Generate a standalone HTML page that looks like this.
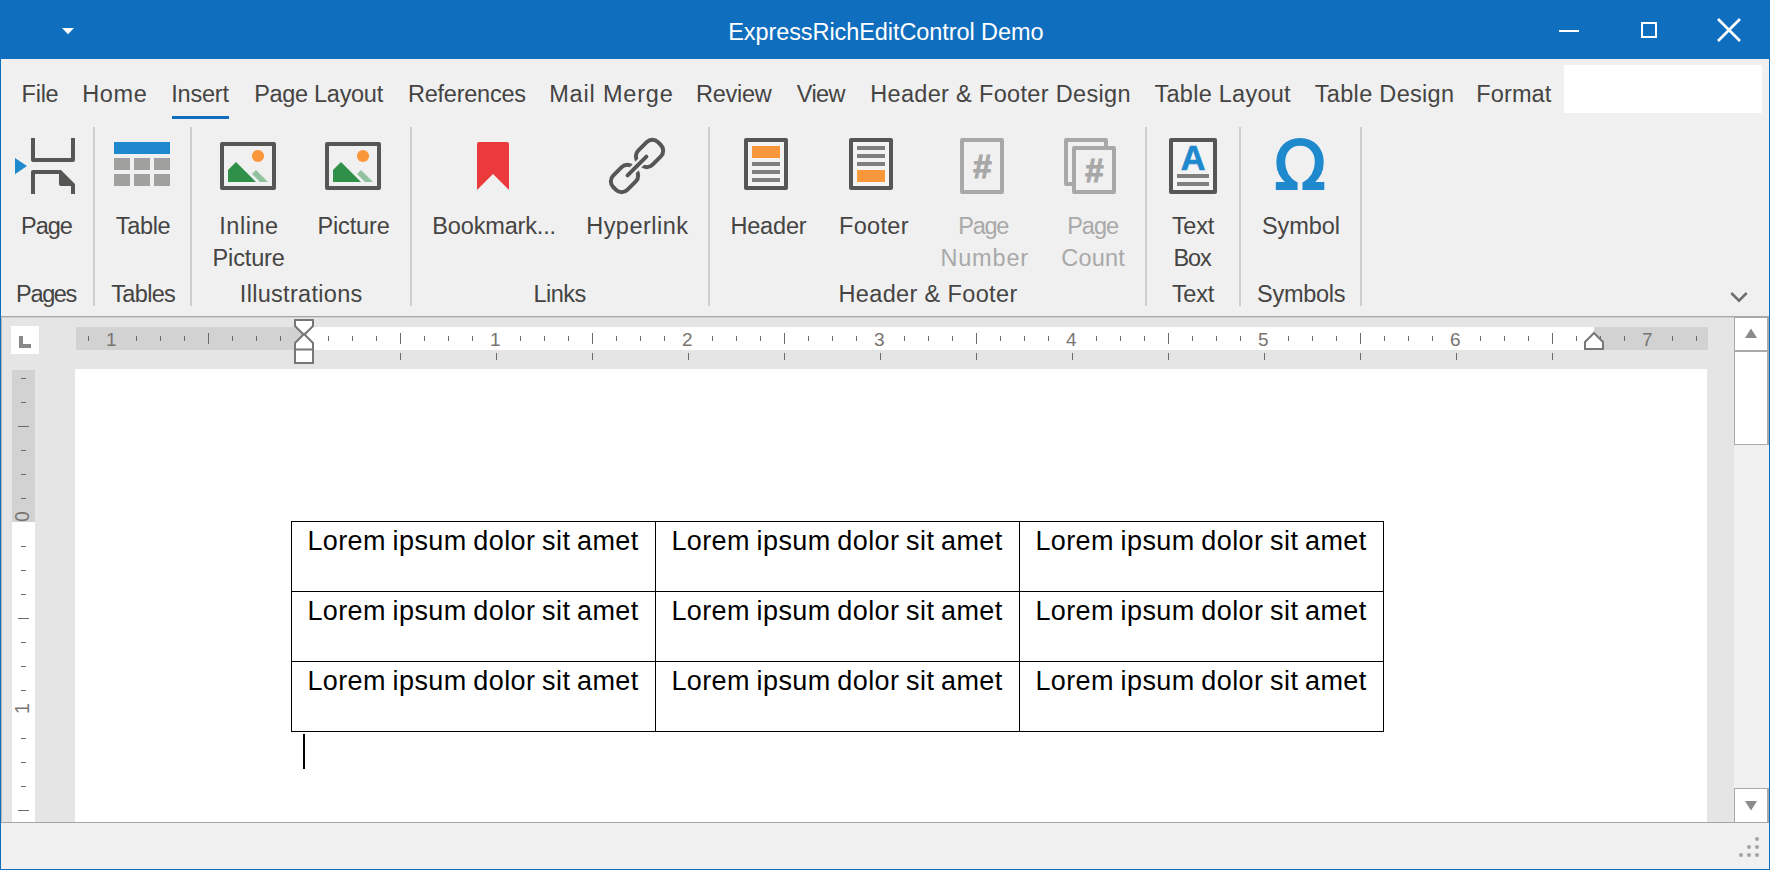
<!DOCTYPE html>
<html lang="en"><head><meta charset="utf-8"><title>ExpressRichEditControl Demo</title>
<style>
html,body{margin:0;padding:0}
body{width:1770px;height:870px;overflow:hidden;position:relative;background:#f0f0f0;font-family:"Liberation Sans",sans-serif}
.a{position:absolute;display:block}
.t{position:absolute;white-space:nowrap;line-height:1;font-kerning:normal}
.sep{top:127px;width:2px;height:179px;background:#cecece}
</style></head><body>
<div class="a" style="left:0;top:0;width:1770px;height:870px;background:#106ebe"></div>
<div class="a" style="left:1px;top:59px;width:1768px;height:810px;background:#f0f0f0"></div>
<svg class="a" style="left:56px;top:24px" width="24" height="16" viewBox="56 24 24 16"><path d="M62 28 H74 L68 34.300Z" fill="#fff"/></svg>
<svg class="a" style="left:1540px;top:10px" width="220" height="40" viewBox="1540 10 220 40" fill="none" stroke="#fff" stroke-width="2">
<path d="M1559 31 H1579"/><rect x="1642" y="23" width="14" height="14"/><path d="M1718 19 L1740 41 M1740 19 L1718 41" stroke-width="2.700"/></svg>
<div class="a" style="left:1564px;top:65px;width:198px;height:47.500px;background:#fff"></div>
<div class="a" style="left:172px;top:116px;width:57px;height:3px;background:#106ebe"></div>
<div class="a sep" style="left:93px"></div><div class="a sep" style="left:190px"></div><div class="a sep" style="left:410px"></div><div class="a sep" style="left:708px"></div><div class="a sep" style="left:1145px"></div><div class="a sep" style="left:1239px"></div><div class="a sep" style="left:1360px"></div>
<svg class="a" style="left:0;top:125px" width="100" height="80" viewBox="0 125 100 80">
<path d="M15 158 L27 166 L15 174.3Z" fill="#1f89cd"/>
<path d="M33 138 V160 H73 V138" fill="none" stroke="#565654" stroke-width="4" stroke-linejoin="round"/>
<path d="M31 194 V172 a2 2 0 0 1 2-2 H61 L75 184 V194 H71 V186 H61 a2 2 0 0 1-2-2 V174 H35 V194Z" fill="#565654"/>
</svg>
<svg class="a" style="left:100px;top:125px" width="90" height="80" viewBox="100 125 90 80">
<rect x="114" y="142" width="56" height="12" fill="#1f89cd"/><rect x="114" y="158" width="16" height="12" fill="#a0a09e"/><rect x="134" y="158" width="16" height="12" fill="#a0a09e"/><rect x="154" y="158" width="16" height="12" fill="#a0a09e"/><rect x="114" y="174" width="16" height="12" fill="#a0a09e"/><rect x="134" y="174" width="16" height="12" fill="#a0a09e"/><rect x="154" y="174" width="16" height="12" fill="#a0a09e"/></svg>
<svg class="a" style="left:216px;top:136px" width="64" height="60" viewBox="-4 136 64 60">
<rect x="2" y="144" width="52" height="44" fill="none" stroke="#565654" stroke-width="4" stroke-linejoin="round"/>
<circle cx="38" cy="156" r="6.1" fill="#fb973b"/>
<path d="M8 182 V170 L16 162 L36 182Z" fill="#2f9149"/>
<path d="M32 174 L36 170 L48 182 H40Z" fill="#91c29f"/>
</svg>
<svg class="a" style="left:321px;top:136px" width="64" height="60" viewBox="-4 136 64 60">
<rect x="2" y="144" width="52" height="44" fill="none" stroke="#565654" stroke-width="4" stroke-linejoin="round"/>
<circle cx="38" cy="156" r="6.1" fill="#fb973b"/>
<path d="M8 182 V170 L16 162 L36 182Z" fill="#2f9149"/>
<path d="M32 174 L36 170 L48 182 H40Z" fill="#91c29f"/>
</svg>
<svg class="a" style="left:470px;top:136px" width="46" height="60" viewBox="470 136 46 60">
<path d="M477 144 a2 2 0 0 1 2-2 H507 a2 2 0 0 1 2 2 V190 L493 174 L477 190Z" fill="#eb3a3b"/></svg>
<svg class="a" style="left:605px;top:134px" width="64" height="64" viewBox="0 0 64 64">
<g transform="translate(32 32) rotate(-45)" fill="none" stroke="#565654" stroke-width="4">
<rect x="3.7" y="-10" width="28" height="20" rx="8"/>
<rect x="-31.7" y="-10" width="28" height="20" rx="8"/>
<rect x="-7" y="-4.2" width="14" height="8.4" fill="#f0f0f0" stroke="none"/>
<line x1="-13.3" y1="0" x2="13.3" y2="0" stroke-linecap="round"/>
</g></svg>
<svg class="a" style="left:740px;top:134px" width="52" height="64" viewBox="-4 134 52 64">
<rect x="2" y="140" width="40" height="48" fill="#f3f3f3" stroke="#565654" stroke-width="4" stroke-linejoin="round"/><rect x="8" y="146" width="28" height="12" fill="#fb973b"/><rect x="8" y="162" width="28" height="4" fill="#7f7f7d"/><rect x="8" y="170" width="28" height="4" fill="#7f7f7d"/><rect x="8" y="178" width="28" height="4" fill="#7f7f7d"/></svg>
<svg class="a" style="left:845px;top:134px" width="52" height="64" viewBox="-4 134 52 64">
<rect x="2" y="140" width="40" height="48" fill="#f3f3f3" stroke="#565654" stroke-width="4" stroke-linejoin="round"/><rect x="8" y="146" width="28" height="4" fill="#7f7f7d"/><rect x="8" y="154" width="28" height="4" fill="#7f7f7d"/><rect x="8" y="162" width="28" height="4" fill="#7f7f7d"/><rect x="8" y="170" width="28" height="12" fill="#fb973b"/></svg>
<svg class="a" style="left:956px;top:134px" width="52" height="64" viewBox="956 134 52 64">
<rect x="962" y="140" width="40" height="52" fill="none" stroke="#a8a8a8" stroke-width="4" stroke-linejoin="round"/>
<text x="982" y="177.5" font-family="Liberation Sans, sans-serif" font-weight="bold" font-style="italic" font-size="33" text-anchor="middle" fill="#a8a8a8" stroke="#a8a8a8" stroke-width="1.1">#</text></svg>
<svg class="a" style="left:1060px;top:134px" width="60" height="64" viewBox="1060 134 60 64">
<path d="M1072 184 H1066 V140 H1106 V146" fill="none" stroke="#a8a8a8" stroke-width="4" stroke-linejoin="round"/>
<rect x="1074" y="148" width="40" height="44" fill="none" stroke="#a8a8a8" stroke-width="4" stroke-linejoin="round"/>
<text x="1094" y="181.5" font-family="Liberation Sans, sans-serif" font-weight="bold" font-style="italic" font-size="33" text-anchor="middle" fill="#a8a8a8" stroke="#a8a8a8" stroke-width="1.1">#</text></svg>
<svg class="a" style="left:1165px;top:134px" width="56" height="64" viewBox="1165 134 56 64">
<rect x="1171" y="140" width="44" height="52" fill="#f3f3f3" stroke="#565654" stroke-width="4" stroke-linejoin="round"/>
<text x="1193" y="170" font-family="Liberation Sans, sans-serif" font-weight="bold" font-size="34.2" text-anchor="middle" fill="#1f89cd" stroke="#1f89cd" stroke-width="0.7">A</text>
<rect x="1177" y="174" width="32" height="4" fill="#7f7f7d"/><rect x="1177" y="182" width="32" height="4" fill="#7f7f7d"/></svg>
<svg class="a" style="left:1270px;top:130px" width="60" height="68" viewBox="1270 130 60 68">
<text x="1300" y="189" font-family="DejaVu Sans, sans-serif" font-size="67.5" text-anchor="middle" fill="#1f89cd" stroke="#1f89cd" stroke-width="2">Ω</text></svg>
<svg class="a" style="left:1724px;top:286px" width="30" height="22" viewBox="1724 286 30 22"><path d="M1731.3 293 L1739 300.700 L1746.700 293" fill="none" stroke="#6e6e6e" stroke-width="2.600"/></svg>
<div class="a" style="left:1px;top:316px;width:1768px;height:1px;background:#a6a6a6"></div>
<div class="a" style="left:1px;top:317px;width:1768px;height:1px;background:#d0d0d0"></div>
<div class="a" style="left:1px;top:318px;width:1733px;height:504px;background:#e5e5e5"></div>
<div class="a" style="left:1px;top:318px;width:1px;height:504px;background:#b8b8b8"></div>
<div class="a" style="left:75px;top:369px;width:1632px;height:453px;background:#fff"></div>
<svg class="a" style="left:0;top:317px" width="1734" height="52" viewBox="0 317 1734 52">
<rect x="11" y="326" width="28" height="28" fill="#fff"/><path d="M19 336 H23 V344 H31 V348 H19Z" fill="#8a8886"/>
<rect x="76" y="327" width="1632" height="23" fill="#d2d2d2"/><rect x="304" y="327" width="1290" height="23" fill="#fff"/>
<rect x="88" y="336" width="1" height="5" fill="#6b6b69"/><rect x="136" y="336" width="1" height="5" fill="#6b6b69"/><rect x="160" y="336" width="1" height="5" fill="#6b6b69"/><rect x="184" y="336" width="1" height="5" fill="#6b6b69"/><rect x="208" y="333" width="1" height="11" fill="#6b6b69"/><rect x="232" y="336" width="1" height="5" fill="#6b6b69"/><rect x="256" y="336" width="1" height="5" fill="#6b6b69"/><rect x="280" y="336" width="1" height="5" fill="#6b6b69"/><rect x="328" y="336" width="1" height="5" fill="#6b6b69"/><rect x="352" y="336" width="1" height="5" fill="#6b6b69"/><rect x="376" y="336" width="1" height="5" fill="#6b6b69"/><rect x="400" y="333" width="1" height="11" fill="#6b6b69"/><rect x="424" y="336" width="1" height="5" fill="#6b6b69"/><rect x="448" y="336" width="1" height="5" fill="#6b6b69"/><rect x="472" y="336" width="1" height="5" fill="#6b6b69"/><rect x="520" y="336" width="1" height="5" fill="#6b6b69"/><rect x="544" y="336" width="1" height="5" fill="#6b6b69"/><rect x="568" y="336" width="1" height="5" fill="#6b6b69"/><rect x="592" y="333" width="1" height="11" fill="#6b6b69"/><rect x="616" y="336" width="1" height="5" fill="#6b6b69"/><rect x="640" y="336" width="1" height="5" fill="#6b6b69"/><rect x="664" y="336" width="1" height="5" fill="#6b6b69"/><rect x="712" y="336" width="1" height="5" fill="#6b6b69"/><rect x="736" y="336" width="1" height="5" fill="#6b6b69"/><rect x="760" y="336" width="1" height="5" fill="#6b6b69"/><rect x="784" y="333" width="1" height="11" fill="#6b6b69"/><rect x="808" y="336" width="1" height="5" fill="#6b6b69"/><rect x="832" y="336" width="1" height="5" fill="#6b6b69"/><rect x="856" y="336" width="1" height="5" fill="#6b6b69"/><rect x="904" y="336" width="1" height="5" fill="#6b6b69"/><rect x="928" y="336" width="1" height="5" fill="#6b6b69"/><rect x="952" y="336" width="1" height="5" fill="#6b6b69"/><rect x="976" y="333" width="1" height="11" fill="#6b6b69"/><rect x="1000" y="336" width="1" height="5" fill="#6b6b69"/><rect x="1024" y="336" width="1" height="5" fill="#6b6b69"/><rect x="1048" y="336" width="1" height="5" fill="#6b6b69"/><rect x="1096" y="336" width="1" height="5" fill="#6b6b69"/><rect x="1120" y="336" width="1" height="5" fill="#6b6b69"/><rect x="1144" y="336" width="1" height="5" fill="#6b6b69"/><rect x="1168" y="333" width="1" height="11" fill="#6b6b69"/><rect x="1192" y="336" width="1" height="5" fill="#6b6b69"/><rect x="1216" y="336" width="1" height="5" fill="#6b6b69"/><rect x="1240" y="336" width="1" height="5" fill="#6b6b69"/><rect x="1288" y="336" width="1" height="5" fill="#6b6b69"/><rect x="1312" y="336" width="1" height="5" fill="#6b6b69"/><rect x="1336" y="336" width="1" height="5" fill="#6b6b69"/><rect x="1360" y="333" width="1" height="11" fill="#6b6b69"/><rect x="1384" y="336" width="1" height="5" fill="#6b6b69"/><rect x="1408" y="336" width="1" height="5" fill="#6b6b69"/><rect x="1432" y="336" width="1" height="5" fill="#6b6b69"/><rect x="1480" y="336" width="1" height="5" fill="#6b6b69"/><rect x="1504" y="336" width="1" height="5" fill="#6b6b69"/><rect x="1528" y="336" width="1" height="5" fill="#6b6b69"/><rect x="1552" y="333" width="1" height="11" fill="#6b6b69"/><rect x="1576" y="336" width="1" height="5" fill="#6b6b69"/><rect x="1600" y="336" width="1" height="5" fill="#6b6b69"/><rect x="1624" y="336" width="1" height="5" fill="#6b6b69"/><rect x="1672" y="336" width="1" height="5" fill="#6b6b69"/><rect x="1696" y="336" width="1" height="5" fill="#6b6b69"/><text x="111.2" y="346" font-size="19" text-anchor="middle" fill="#777573" font-family="Liberation Sans, sans-serif">1</text><text x="495.2" y="346" font-size="19" text-anchor="middle" fill="#777573" font-family="Liberation Sans, sans-serif">1</text><text x="687.2" y="346" font-size="19" text-anchor="middle" fill="#777573" font-family="Liberation Sans, sans-serif">2</text><text x="879.2" y="346" font-size="19" text-anchor="middle" fill="#777573" font-family="Liberation Sans, sans-serif">3</text><text x="1071.2" y="346" font-size="19" text-anchor="middle" fill="#777573" font-family="Liberation Sans, sans-serif">4</text><text x="1263.2" y="346" font-size="19" text-anchor="middle" fill="#777573" font-family="Liberation Sans, sans-serif">5</text><text x="1455.2" y="346" font-size="19" text-anchor="middle" fill="#777573" font-family="Liberation Sans, sans-serif">6</text><text x="1647.2" y="346" font-size="19" text-anchor="middle" fill="#777573" font-family="Liberation Sans, sans-serif">7</text><rect x="400" y="353" width="1" height="7" fill="#6b6b69"/><rect x="496" y="353" width="1" height="7" fill="#6b6b69"/><rect x="592" y="353" width="1" height="7" fill="#6b6b69"/><rect x="688" y="353" width="1" height="7" fill="#6b6b69"/><rect x="784" y="353" width="1" height="7" fill="#6b6b69"/><rect x="880" y="353" width="1" height="7" fill="#6b6b69"/><rect x="976" y="353" width="1" height="7" fill="#6b6b69"/><rect x="1072" y="353" width="1" height="7" fill="#6b6b69"/><rect x="1168" y="353" width="1" height="7" fill="#6b6b69"/><rect x="1264" y="353" width="1" height="7" fill="#6b6b69"/><rect x="1360" y="353" width="1" height="7" fill="#6b6b69"/><rect x="1456" y="353" width="1" height="7" fill="#6b6b69"/><rect x="1552" y="353" width="1" height="7" fill="#6b6b69"/><path d="M295 320 H313 V326 L304 335 L295 326Z" fill="#fff" stroke="#777775" stroke-width="2"/><path d="M304 334 L313 343 V363 H295 V343Z M295 349.5 H313" fill="#fff" stroke="#777775" stroke-width="2"/><path d="M1594 333 L1603 342 V349 H1585 V342Z" fill="#fff" stroke="#777775" stroke-width="2"/></svg>
<svg class="a" style="left:0;top:369px" width="75" height="453" viewBox="0 369 75 453">
<rect x="12" y="370" width="23" height="452" fill="#fff"/><rect x="12" y="370" width="23" height="152" fill="#d2d2d2"/>
<rect x="21" y="378" width="5" height="1" fill="#6b6b69"/><rect x="21" y="402" width="5" height="1" fill="#6b6b69"/><rect x="18" y="426" width="11" height="1" fill="#6b6b69"/><rect x="21" y="450" width="5" height="1" fill="#6b6b69"/><rect x="21" y="474" width="5" height="1" fill="#6b6b69"/><rect x="21" y="498" width="5" height="1" fill="#6b6b69"/><rect x="21" y="546" width="5" height="1" fill="#6b6b69"/><rect x="21" y="570" width="5" height="1" fill="#6b6b69"/><rect x="21" y="594" width="5" height="1" fill="#6b6b69"/><rect x="18" y="618" width="11" height="1" fill="#6b6b69"/><rect x="21" y="642" width="5" height="1" fill="#6b6b69"/><rect x="21" y="666" width="5" height="1" fill="#6b6b69"/><rect x="21" y="690" width="5" height="1" fill="#6b6b69"/><rect x="21" y="738" width="5" height="1" fill="#6b6b69"/><rect x="21" y="762" width="5" height="1" fill="#6b6b69"/><rect x="21" y="786" width="5" height="1" fill="#6b6b69"/><rect x="18" y="810" width="11" height="1" fill="#6b6b69"/><text transform="translate(29 522) rotate(-90)" font-size="19.5" fill="#777573" font-family="Liberation Sans, sans-serif">0</text><text transform="translate(29 714) rotate(-90)" font-size="19.5" fill="#777573" font-family="Liberation Sans, sans-serif">1</text></svg>
<div class="a" style="left:291px;top:521px;width:1px;height:211px;background:#000"></div>
<div class="a" style="left:655px;top:521px;width:1px;height:211px;background:#000"></div>
<div class="a" style="left:1019px;top:521px;width:1px;height:211px;background:#000"></div>
<div class="a" style="left:1383px;top:521px;width:1px;height:211px;background:#000"></div>
<div class="a" style="left:291px;top:521px;width:1093px;height:1px;background:#000"></div>
<div class="a" style="left:291px;top:591px;width:1093px;height:1px;background:#000"></div>
<div class="a" style="left:291px;top:661px;width:1093px;height:1px;background:#000"></div>
<div class="a" style="left:291px;top:731px;width:1093px;height:1px;background:#000"></div>
<div class="a" style="left:303px;top:734px;width:2px;height:35px;background:#000"></div>
<div class="a" style="left:1734px;top:318px;width:34px;height:504px;background:#f0f0f0"></div>
<div class="a" style="left:1734px;top:317px;width:35px;height:128px;background:#a9a9a9"></div>
<div class="a" style="left:1735px;top:318px;width:32px;height:32px;background:#fff"></div>
<div class="a" style="left:1735px;top:352px;width:32px;height:92px;background:#fff"></div>
<div class="a" style="left:1734px;top:788px;width:35px;height:34px;background:#a9a9a9"></div>
<div class="a" style="left:1735px;top:789px;width:32px;height:33px;background:#fff"></div>
<svg class="a" style="left:1735px;top:318px" width="32" height="32" viewBox="1735 318 32 32"><path d="M1745 338 L1751 328.500 L1757 338Z" fill="#8a8a8a"/></svg>
<svg class="a" style="left:1735px;top:789px" width="32" height="33" viewBox="1735 789 32 33"><path d="M1745 801 L1751 810.500 L1757 801Z" fill="#8a8a8a"/></svg>
<div class="a" style="left:1px;top:822px;width:1768px;height:1px;background:#a6a6a6"></div>
<svg class="a" style="left:1736px;top:834px" width="26" height="26" viewBox="1736 834 26 26" fill="#a3a3a3">
<circle cx="1757" cy="839" r="2"/><circle cx="1749" cy="847" r="2"/><circle cx="1757" cy="847" r="2"/>
<circle cx="1741" cy="855" r="2"/><circle cx="1749" cy="855" r="2"/><circle cx="1757" cy="855" r="2"/></svg>
<span class="t" style="left:728.20px;top:21.11px;font-size:23.5px;color:#ffffff;letter-spacing:-0.077px;">ExpressRichEditControl Demo</span>
<span class="t" style="left:21.60px;top:83.11px;font-size:23.5px;color:#454443;letter-spacing:-0.267px;">File</span>
<span class="t" style="left:82.20px;top:83.11px;font-size:23.5px;color:#454443;letter-spacing:0.667px;">Home</span>
<span class="t" style="left:171.20px;top:83.11px;font-size:23.5px;color:#454443;letter-spacing:-0.200px;">Insert</span>
<span class="t" style="left:254.20px;top:83.11px;font-size:23.5px;color:#454443;letter-spacing:-0.300px;">Page Layout</span>
<span class="t" style="left:408.00px;top:83.11px;font-size:23.5px;color:#454443;letter-spacing:-0.244px;">References</span>
<span class="t" style="left:549.20px;top:83.11px;font-size:23.5px;color:#454443;letter-spacing:0.822px;">Mail Merge</span>
<span class="t" style="left:696.00px;top:83.11px;font-size:23.5px;color:#454443;letter-spacing:-0.280px;">Review</span>
<span class="t" style="left:796.80px;top:83.11px;font-size:23.5px;color:#454443;letter-spacing:-0.600px;">View</span>
<span class="t" style="left:870.20px;top:83.11px;font-size:23.5px;color:#454443;letter-spacing:0.333px;">Header &amp; Footer Design</span>
<span class="t" style="left:1154.50px;top:83.11px;font-size:23.5px;color:#454443;letter-spacing:0.255px;">Table Layout</span>
<span class="t" style="left:1314.80px;top:83.11px;font-size:23.5px;color:#454443;letter-spacing:0.309px;">Table Design</span>
<span class="t" style="left:1476.30px;top:83.11px;font-size:23.5px;color:#454443;letter-spacing:0.120px;">Format</span>
<span class="t" style="left:21.10px;top:215.11px;font-size:23.5px;color:#454443;letter-spacing:-1.067px;">Page</span>
<span class="t" style="left:115.80px;top:215.11px;font-size:23.5px;color:#454443;letter-spacing:-0.350px;">Table</span>
<span class="t" style="left:219.20px;top:215.11px;font-size:23.5px;color:#454443;letter-spacing:0.560px;">Inline</span>
<span class="t" style="left:212.50px;top:247.11px;font-size:23.5px;color:#454443;letter-spacing:-0.133px;">Picture</span>
<span class="t" style="left:317.40px;top:215.11px;font-size:23.5px;color:#454443;letter-spacing:-0.133px;">Picture</span>
<span class="t" style="left:432.30px;top:215.11px;font-size:23.5px;color:#454443;letter-spacing:-0.160px;">Bookmark...</span>
<span class="t" style="left:586.20px;top:215.11px;font-size:23.5px;color:#454443;letter-spacing:0.475px;">Hyperlink</span>
<span class="t" style="left:730.40px;top:215.11px;font-size:23.5px;color:#454443;letter-spacing:-0.160px;">Header</span>
<span class="t" style="left:839.00px;top:215.11px;font-size:23.5px;color:#454443;letter-spacing:0.320px;">Footer</span>
<span class="t" style="left:958.30px;top:215.11px;font-size:23.5px;color:#a9a9a9;letter-spacing:-1.267px;">Page</span>
<span class="t" style="left:940.40px;top:247.11px;font-size:23.5px;color:#a9a9a9;letter-spacing:0.840px;">Number</span>
<span class="t" style="left:1067.20px;top:215.11px;font-size:23.5px;color:#a9a9a9;letter-spacing:-1.000px;">Page</span>
<span class="t" style="left:1061.20px;top:247.11px;font-size:23.5px;color:#a9a9a9;letter-spacing:0.250px;">Count</span>
<span class="t" style="left:1171.90px;top:215.11px;font-size:23.5px;color:#454443;letter-spacing:-0.267px;">Text</span>
<span class="t" style="left:1173.40px;top:247.11px;font-size:23.5px;color:#454443;letter-spacing:-1.100px;">Box</span>
<span class="t" style="left:1261.90px;top:215.11px;font-size:23.5px;color:#454443;letter-spacing:-0.040px;">Symbol</span>
<span class="t" style="left:16.10px;top:283.11px;font-size:23.5px;color:#454443;letter-spacing:-1.350px;">Pages</span>
<span class="t" style="left:111.30px;top:283.11px;font-size:23.5px;color:#454443;letter-spacing:-0.680px;">Tables</span>
<span class="t" style="left:239.80px;top:283.11px;font-size:23.5px;color:#454443;letter-spacing:0.300px;">Illustrations</span>
<span class="t" style="left:533.50px;top:283.11px;font-size:23.5px;color:#454443;letter-spacing:-0.550px;">Links</span>
<span class="t" style="left:838.50px;top:283.11px;font-size:23.5px;color:#454443;letter-spacing:0.357px;">Header &amp; Footer</span>
<span class="t" style="left:1171.90px;top:283.11px;font-size:23.5px;color:#454443;letter-spacing:-0.267px;">Text</span>
<span class="t" style="left:1257.00px;top:283.11px;font-size:23.5px;color:#454443;letter-spacing:-0.267px;">Symbols</span>
<span class="t" style="left:307.40px;top:528.14px;font-size:27px;color:#000000;letter-spacing:0.400px;word-spacing:-1.2px;">Lorem ipsum dolor sit amet</span>
<span class="t" style="left:671.40px;top:528.14px;font-size:27px;color:#000000;letter-spacing:0.400px;word-spacing:-1.2px;">Lorem ipsum dolor sit amet</span>
<span class="t" style="left:1035.40px;top:528.14px;font-size:27px;color:#000000;letter-spacing:0.400px;word-spacing:-1.2px;">Lorem ipsum dolor sit amet</span>
<span class="t" style="left:307.40px;top:598.14px;font-size:27px;color:#000000;letter-spacing:0.400px;word-spacing:-1.2px;">Lorem ipsum dolor sit amet</span>
<span class="t" style="left:671.40px;top:598.14px;font-size:27px;color:#000000;letter-spacing:0.400px;word-spacing:-1.2px;">Lorem ipsum dolor sit amet</span>
<span class="t" style="left:1035.40px;top:598.14px;font-size:27px;color:#000000;letter-spacing:0.400px;word-spacing:-1.2px;">Lorem ipsum dolor sit amet</span>
<span class="t" style="left:307.40px;top:668.14px;font-size:27px;color:#000000;letter-spacing:0.400px;word-spacing:-1.2px;">Lorem ipsum dolor sit amet</span>
<span class="t" style="left:671.40px;top:668.14px;font-size:27px;color:#000000;letter-spacing:0.400px;word-spacing:-1.2px;">Lorem ipsum dolor sit amet</span>
<span class="t" style="left:1035.40px;top:668.14px;font-size:27px;color:#000000;letter-spacing:0.400px;word-spacing:-1.2px;">Lorem ipsum dolor sit amet</span>
</body></html>
